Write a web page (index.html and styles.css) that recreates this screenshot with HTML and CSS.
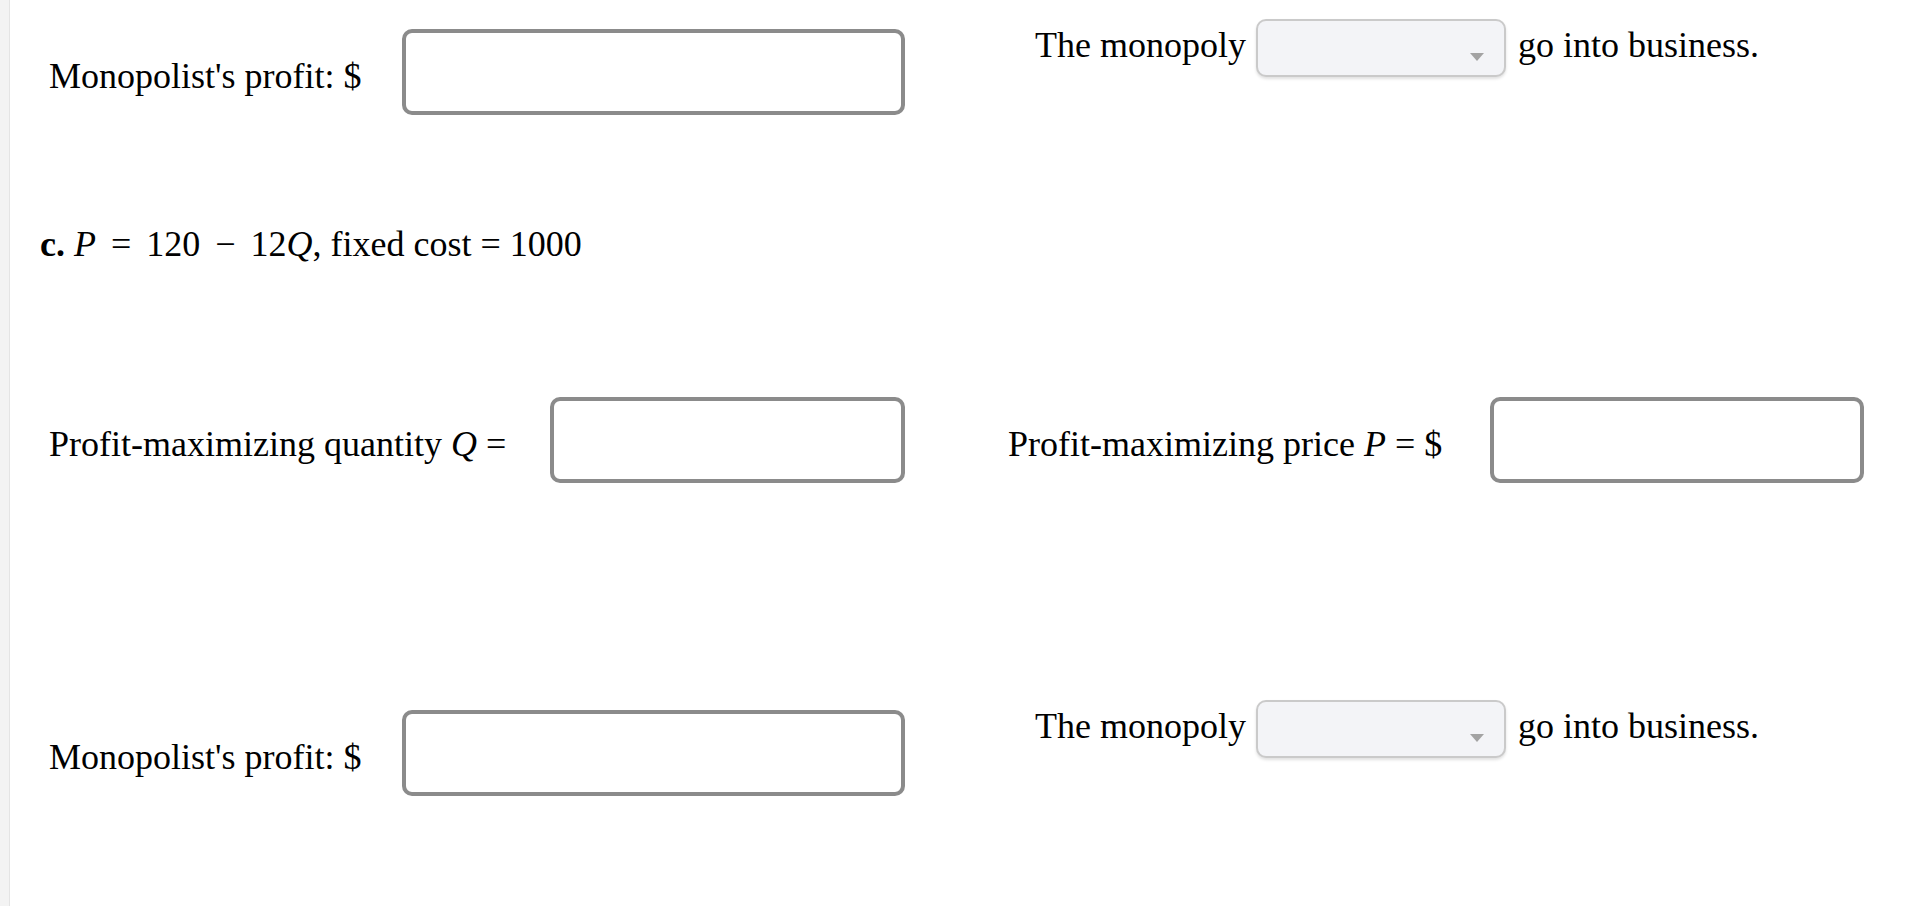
FILE: index.html
```html
<!DOCTYPE html>
<html lang="en">
<head>
  <meta charset="UTF-8">
  <meta name="viewport" content="width=device-width, initial-scale=1.0">
  <title>Monopoly - part c</title>
  <link rel="stylesheet" href="styles.css">
</head>
<body>
  <div class="page">
    <div class="row row-first">
      <div class="cell cell-left">
        <label class="label" for="profit-b">Monopolist's profit: $</label>
        <input id="profit-b" class="answer answer-wide" type="text">
      </div>
      <div class="cell cell-right cell-choice">
        <span class="label label-up">The monopoly</span>
        <span class="select-wrap">
          <select class="choice" aria-label="The monopoly ... go into business">
            <option></option>
            <option>will</option>
            <option>will not</option>
          </select>
          <svg class="caret" width="14" height="8" viewBox="0 0 14 8"><path d="M0 0h14L7 8z" fill="#a3a3a3"/></svg>
        </span>
        <span class="label label-up">go into business.</span>
      </div>
    </div>

    <h2 class="part"><b>c.</b> <i>P</i><span class="op">=</span>120<span class="op">&minus;</span>12<i>Q</i>, fixed cost = 1000</h2>

    <div class="row row-second">
      <div class="cell cell-left">
        <label class="label" for="qty-c">Profit-maximizing quantity <i>Q</i> =</label>
        <input id="qty-c" class="answer answer-narrow" type="text">
      </div>
      <div class="cell cell-right">
        <label class="label" for="price-c">Profit-maximizing price <i>P</i> = $</label>
        <input id="price-c" class="answer answer-price" type="text">
      </div>
    </div>

    <div class="row row-third">
      <div class="cell cell-left">
        <label class="label" for="profit-c">Monopolist's profit: $</label>
        <input id="profit-c" class="answer answer-wide" type="text">
      </div>
      <div class="cell cell-right cell-choice">
        <span class="label label-up">The monopoly</span>
        <span class="select-wrap">
          <select class="choice" aria-label="The monopoly ... go into business">
            <option></option>
            <option>will</option>
            <option>will not</option>
          </select>
          <svg class="caret" width="14" height="8" viewBox="0 0 14 8"><path d="M0 0h14L7 8z" fill="#a3a3a3"/></svg>
        </span>
        <span class="label label-up">go into business.</span>
      </div>
    </div>
  </div>
</body>
</html>
```

FILE: styles.css
```css
html, body { margin: 0; padding: 0; background: #fff; }
body { font-family: "Liberation Serif", "Times New Roman", serif; font-size: 36px; color: #000; border-left: 9px solid #f3f3f3; }
.page { border-left: 1px solid #e4e4e4; padding-left: 30px; min-height: 906px; box-sizing: border-box; }

.row { display: grid; grid-template-columns: 856px 856px; column-gap: 103px; margin-left: 9px; align-items: start; }
.row-first { padding-top: 19px; }
.row-first .cell-left { margin-top: 10px; }
.row-second { margin-top: 132px; align-items: center; }
.row-third { margin-top: 217px; }
.row-third .cell-left { margin-top: 10px; }

.cell { display: flex; align-items: center; }
.cell-left .answer { margin-left: auto; }
.cell-right { justify-content: space-between; }
.cell-choice { justify-content: flex-start; padding-left: 27px; }

.label { padding-top: 8px; white-space: nowrap; }
.label-up { padding-top: 0; padding-bottom: 6px; }

.answer { box-sizing: border-box; height: 86px; border: 4px solid #8b8b8b; border-radius: 10px; background: #fff; font: inherit; padding: 0 12px; outline: none; }
.answer-wide { width: 503px; }
.answer-narrow { width: 355px; }
.answer-price { width: 374px; }

.select-wrap { position: relative; display: inline-block; margin: 0 12px 0 10px; }
.choice { appearance: none; -webkit-appearance: none; box-sizing: border-box; width: 250px; height: 58px; border: 2px solid #cacaca; border-radius: 10px; background: #f3f4f7; box-shadow: 0 2px 3px rgba(0, 0, 0, 0.12); font: inherit; font-size: 30px; display: block; }
.caret { position: absolute; right: 22px; top: 34px; }

.part { font-size: 36px; font-weight: normal; margin: 108px 0 0; line-height: normal; }
.part b { font-weight: bold; }
.op { margin: 0 15px; }
```
